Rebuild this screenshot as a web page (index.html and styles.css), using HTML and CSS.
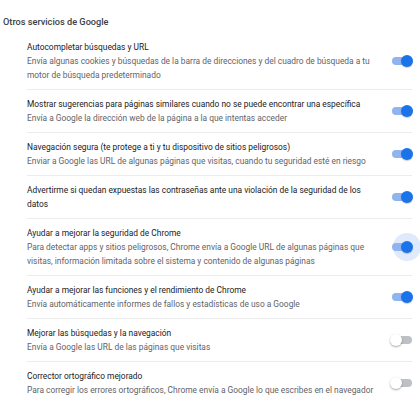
FILE: index.html
```html
<!DOCTYPE html>
<html lang="es">
<head>
<meta charset="utf-8">
<link rel="stylesheet" href="styles.css">
</head>
<body>
<div class="page">
  <div class="heading">Otros servicios de Google</div>
  <div class="list">
    <div class="row">
      <div class="text">
        <div class="title">Autocompletar búsquedas y URL</div>
        <div class="desc">Envía algunas cookies y búsquedas de la barra de direcciones y del cuadro de búsqueda a tu motor de búsqueda predeterminado</div>
      </div>
      <div class="toggle on"><span class="track"></span><span class="knob"></span></div>
    </div>
    <div class="row">
      <div class="text">
        <div class="title">Mostrar sugerencias para páginas similares cuando no se puede encontrar una específica</div>
        <div class="desc">Envía a Google la dirección web de la página a la que intentas acceder</div>
      </div>
      <div class="toggle on"><span class="track"></span><span class="knob"></span></div>
    </div>
    <div class="row">
      <div class="text">
        <div class="title">Navegación segura (te protege a ti y tu dispositivo de sitios peligrosos)</div>
        <div class="desc">Enviar a Google las URL de algunas páginas que visitas, cuando tu seguridad esté en riesgo</div>
      </div>
      <div class="toggle on"><span class="track"></span><span class="knob"></span></div>
    </div>
    <div class="row">
      <div class="text">
        <div class="title">Advertirme si quedan expuestas las contraseñas ante una violación de la seguridad de los datos</div>
      </div>
      <div class="toggle on"><span class="track"></span><span class="knob"></span></div>
    </div>
    <div class="row">
      <div class="text">
        <div class="title">Ayudar a mejorar la seguridad de Chrome</div>
        <div class="desc">Para detectar apps y sitios peligrosos, Chrome envía a Google URL de algunas páginas que visitas, información limitada sobre el sistema y contenido de algunas páginas</div>
      </div>
      <div class="toggle on focus"><span class="ripple"></span><span class="track"></span><span class="knob"></span></div>
    </div>
    <div class="row">
      <div class="text">
        <div class="title">Ayudar a mejorar las funciones y el rendimiento de Chrome</div>
        <div class="desc">Envía automáticamente informes de fallos y estadísticas de uso a Google</div>
      </div>
      <div class="toggle on"><span class="track"></span><span class="knob"></span></div>
    </div>
    <div class="row">
      <div class="text">
        <div class="title">Mejorar las búsquedas y la navegación</div>
        <div class="desc">Envía a Google las URL de las páginas que visitas</div>
      </div>
      <div class="toggle"><span class="track"></span><span class="knob"></span></div>
    </div>
    <div class="row last">
      <div class="text">
        <div class="title">Corrector ortográfico mejorado</div>
        <div class="desc">Para corregir los errores ortográficos, Chrome envía a Google lo que escribes en el navegador</div>
      </div>
      <div class="toggle"><span class="track"></span><span class="knob"></span></div>
    </div>
  </div>
</div>
</body>
</html>
```
FILE: styles.css
```css
html, body {
  margin: 0;
  padding: 0;
  background: #ffffff;
}
body {
  font-family: Roboto, "Liberation Sans", Arial, sans-serif;
  -webkit-font-smoothing: antialiased;
}
.page {
  padding: 15px 0 0 3px;
}
.heading {
  font-size: 9.2px;
  font-weight: 500;
  color: #3c4043;
  line-height: 14px;
  height: 18px;
}
.list {
  margin-left: 24px;
  margin-right: 8px;
}
.row {
  display: flex;
  align-items: center;
  padding: 7px 0;
  border-bottom: 1px solid #ececec;
}
.row.last {
  border-bottom: none;
}
.text {
  width: 348px;
  flex: none;
  font-size: 8.4px;
  line-height: 14px;
}
.title {
  color: #202124;
}
.desc {
  color: #5f6368;
}
.toggle {
  position: relative;
  width: 20px;
  height: 12px;
  margin-left: auto;
}
.track {
  position: absolute;
  left: 0;
  top: 2px;
  width: 20px;
  height: 8px;
  border-radius: 4px;
  background: #bdc1c6;
}
.knob {
  position: absolute;
  top: 0;
  left: -2px;
  width: 12px;
  height: 12px;
  border-radius: 50%;
  background: #ffffff;
  box-shadow: 0 1px 2px rgba(0, 0, 0, 0.35);
}
.toggle.on .track {
  background: #8fb4ef;
}
.toggle.on .knob {
  left: 9px;
  background: #1a73e8;
  box-shadow: 0 1px 1px rgba(0, 0, 0, 0.2);
}
.ripple {
  position: absolute;
  left: 1px;
  top: -8px;
  width: 28px;
  height: 28px;
  border-radius: 50%;
  background: rgba(26, 115, 232, 0.14);
}
```
